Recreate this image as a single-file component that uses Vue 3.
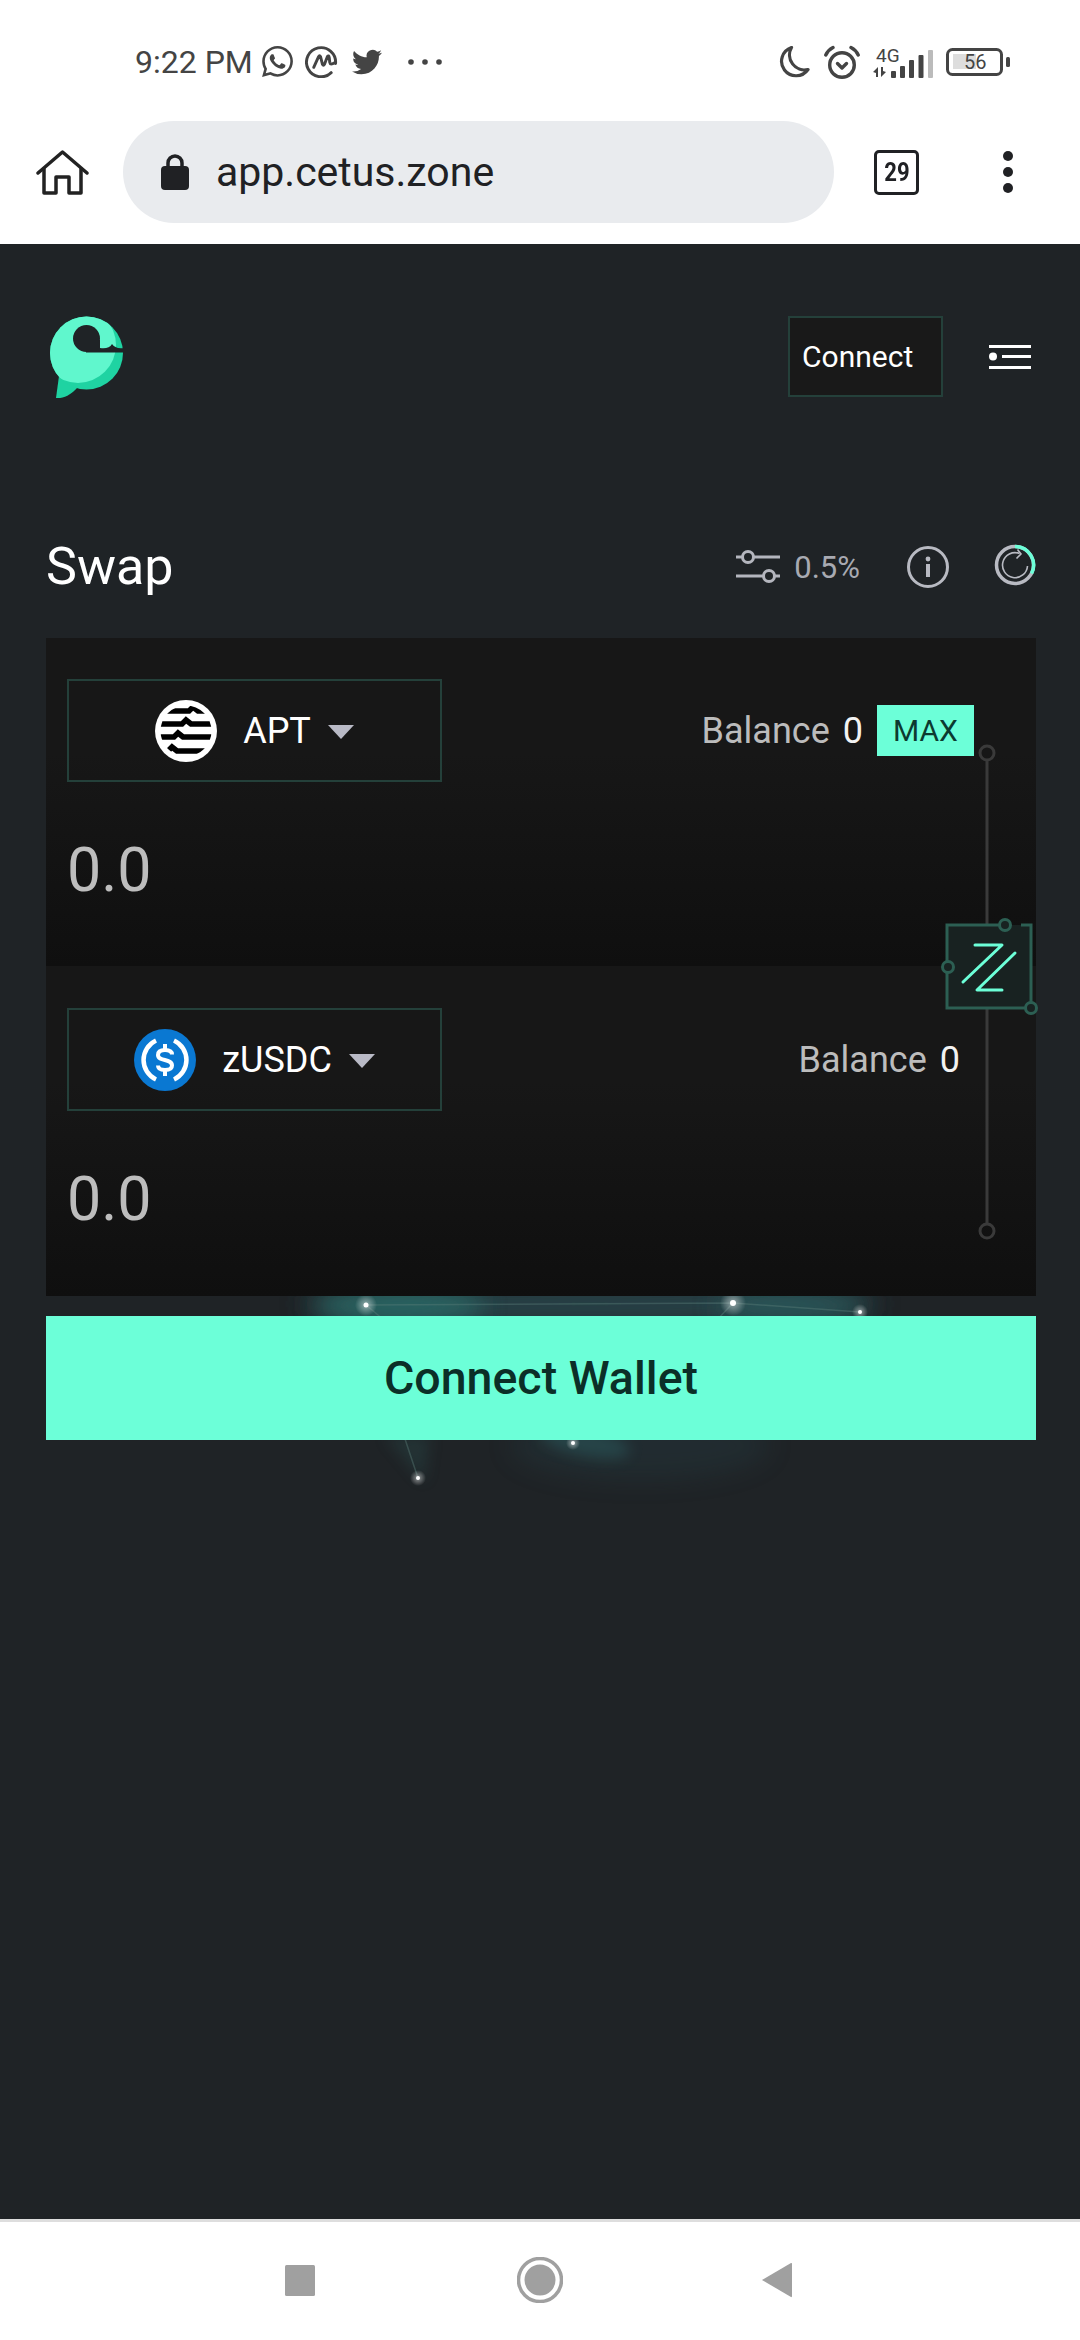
<script setup>
const tokens = [
  { name: 'APT', showMax: true },
  { name: 'zUSDC', showMax: false },
]

const stars = [
  { x: 366, y: 1305, r: 2.5, glow: 11 },
  { x: 733, y: 1303, r: 3, glow: 13 },
  { x: 860, y: 1312, r: 2, glow: 8 },
  { x: 418, y: 1478, r: 2, glow: 8 },
  { x: 573, y: 1443, r: 2, glow: 7 },
]

const signalBars = [
  { x: 18, y: 23, h: 7, fill: '#444' },
  { x: 27, y: 18, h: 12, fill: '#444' },
  { x: 36, y: 12, h: 18, fill: '#444' },
  { x: 45.5, y: 7, h: 23, fill: '#444' },
  { x: 55, y: 2, h: 28, fill: '#bbb' },
]
</script>

<template>
  <div class="phone">
    <div class="status-bar">
      <div class="status-left">
        <span class="time">9:22 PM</span>
        <svg class="ic-wa" viewBox="0 0 24 24" fill="#444"><path d="M17.472 14.382c-.297-.149-1.758-.867-2.03-.967-.273-.099-.471-.148-.67.15-.197.297-.767.966-.94 1.164-.173.199-.347.223-.644.075-.297-.15-1.255-.463-2.39-1.475-.883-.788-1.48-1.761-1.653-2.059-.173-.297-.018-.458.13-.606.134-.133.298-.347.446-.52.149-.174.198-.298.298-.497.099-.198.05-.371-.025-.52-.075-.149-.669-1.612-.916-2.207-.242-.579-.487-.5-.669-.51-.173-.008-.371-.01-.57-.01-.198 0-.52.074-.792.372-.272.297-1.04 1.016-1.04 2.479 0 1.462 1.065 2.875 1.213 3.074.149.198 2.096 3.2 5.077 4.487.709.306 1.262.489 1.694.625.712.227 1.36.195 1.871.118.571-.085 1.758-.719 2.006-1.413.248-.694.248-1.289.173-1.413-.074-.124-.272-.198-.57-.347m-5.421 7.403h-.004a9.87 9.87 0 01-5.031-1.378l-.361-.214-3.741.982.998-3.648-.235-.374a9.86 9.86 0 01-1.51-5.26c.001-5.45 4.436-9.884 9.888-9.884 2.64 0 5.122 1.03 6.988 2.898a9.825 9.825 0 012.893 6.994c-.003 5.45-4.437 9.884-9.885 9.884m8.413-18.297A11.815 11.815 0 0012.05 0C5.495 0 .16 5.335.157 11.892c0 2.096.547 4.142 1.588 5.945L.057 24l6.305-1.654a11.882 11.882 0 005.683 1.448h.005c6.554 0 11.89-5.335 11.893-11.893a11.821 11.821 0 00-3.48-8.413z" /></svg>
        <svg class="ic-coin" viewBox="0 0 34 34" fill="none" stroke="#444" stroke-width="3" stroke-linecap="round" stroke-linejoin="round"><path d="M31.5 19A15 15 0 1 0 27 28.5" /><path d="M9 23 L14 12 Q15 10 16 12 L18 20 Q19 22 20 20 L23 12 Q24.500 10 25 13 L25.500 18 Q26 21 31 18" /></svg>
        <svg class="ic-tw" viewBox="0 0 24 24" fill="#444"><path d="M23.953 4.57a10 10 0 01-2.825.775 4.958 4.958 0 002.163-2.723c-.951.555-2.005.959-3.127 1.184a4.92 4.92 0 00-8.384 4.482C7.69 8.095 4.067 6.13 1.64 3.162a4.822 4.822 0 00-.666 2.475c0 1.71.87 3.213 2.188 4.096a4.904 4.904 0 01-2.228-.616v.06a4.923 4.923 0 003.946 4.827 4.996 4.996 0 01-2.212.085 4.936 4.936 0 004.604 3.417 9.867 9.867 0 01-6.102 2.105c-.39 0-.779-.023-1.17-.067a13.995 13.995 0 007.557 2.209c9.053 0 13.998-7.496 13.998-13.985 0-.21 0-.42-.015-.63A9.935 9.935 0 0024 4.59z" /></svg>
        <svg class="ic-more" viewBox="0 0 34 6" fill="#444"><circle cx="3" cy="3" r="2.800" /><circle cx="17" cy="3" r="2.800" /><circle cx="31" cy="3" r="2.800" /></svg>
      </div>
      <div class="status-right">
        <svg class="ic-moon" viewBox="0 0 31 33" fill="none" stroke="#444" stroke-width="3.200" stroke-linejoin="round"><path d="M12.500 2.500A14.500 14.500 0 1 0 29 24.500 A15 15 0 0 1 12.500 2.500Z" /></svg>
        <svg class="ic-alarm" viewBox="0 0 36 34" fill="none" stroke="#444" stroke-width="3.400" stroke-linecap="round" stroke-linejoin="round"><circle cx="18" cy="20" r="12.300" /><path d="M1.800 10 Q4 5 9 2.500" /><path d="M34.200 10 Q32 5 27 2.500" /><path d="M13.500 18.500 L18 23 L22.500 18.500" /></svg>
        <svg class="ic-signal" viewBox="0 -4 60 36" fill="#444">
          <text x="3" y="14" class="net-label">4G</text>
          <path d="M5 19 V29 H3 V25 L0 24 Z" />
          <path d="M8 29 V19 H10 V23 L13 24 Z" />
          <rect v-for="bar in signalBars" :key="bar.x" :x="bar.x" :y="bar.y" width="5" :height="bar.h" rx="1" :fill="bar.fill" />
        </svg>
        <svg class="ic-battery" viewBox="0 0 64 28" fill="none">
          <rect x="7" y="6" width="23" height="15" fill="#ddd" />
          <rect x="1.500" y="1.500" width="54" height="25" rx="5" stroke="#444" stroke-width="3" />
          <rect x="60" y="9" width="4" height="10" rx="1.500" fill="#444" />
          <text x="18" y="20.500" class="battery-label">56</text>
        </svg>
      </div>
    </div>

    <div class="browser-bar">
      <svg class="ic-home" viewBox="0 0 53 45" fill="none" stroke="#222" stroke-width="3.500" stroke-linecap="round" stroke-linejoin="round"><path d="M2 23 L26.500 2 L51 23" /><path d="M8 19 V43 H20 V27 H33 V43 H45 V19" /></svg>
      <div class="url-pill">
        <svg class="ic-lock" viewBox="0 0 28 36" fill="#202124"><path d="M7 16 V9 A7 7 0 0 1 21 9 V16" fill="none" stroke="#202124" stroke-width="3.500" /><rect y="12" width="28" height="24" rx="4" /></svg>
        <span class="url">app.cetus.zone</span>
      </div>
      <div class="tab-count"><span>29</span></div>
      <svg class="ic-dots" viewBox="0 0 12 42" fill="#202124"><circle cx="6" cy="5" r="5" /><circle cx="6" cy="21" r="5" /><circle cx="6" cy="37" r="5" /></svg>
    </div>

    <main class="main">
      <svg class="sky" viewBox="0 1284 1080 220" fill="none">
        <defs>
          <filter id="soft" x="-50%" y="-100%" width="200%" height="300%"><feGaussianBlur stdDeviation="12" /></filter>
          <filter id="softer" x="-50%" y="-100%" width="200%" height="300%"><feGaussianBlur stdDeviation="7" /></filter>
          <radialGradient id="halo"><stop offset="0" stop-color="#fff" stop-opacity=".5" /><stop offset="1" stop-color="#fff" stop-opacity="0" /></radialGradient>
        </defs>
        <ellipse cx="590" cy="1304" rx="290" ry="20" fill="#2c4a50" opacity=".8" filter="url(#soft)" />
        <ellipse cx="400" cy="1306" rx="85" ry="20" fill="#2a6f6c" opacity=".75" filter="url(#soft)" />
        <ellipse cx="790" cy="1306" rx="75" ry="18" fill="#2a5f60" opacity=".7" filter="url(#soft)" />
        <ellipse cx="640" cy="1446" rx="130" ry="34" fill="#254047" opacity=".3" filter="url(#soft)" />
        <ellipse cx="585" cy="1442" rx="46" ry="14" fill="#2f6a6c" opacity=".4" filter="url(#softer)" transform="rotate(12 585 1442)" />
        <path d="M385 1436 H430 L424 1482 Z" fill="#2b4f50" opacity=".35" filter="url(#softer)" />
        <path d="M366 1305 L733 1303 L860 1312 M366 1305 L396 1330 M733 1303 L715 1322 M404 1436 L418 1478" stroke="#5d7f7b" stroke-width="1.500" opacity=".4" />
        <g v-for="star in stars" :key="star.x">
          <circle :cx="star.x" :cy="star.y" :r="star.glow" fill="url(#halo)" />
          <circle :cx="star.x" :cy="star.y" :r="star.r" fill="#fff" />
        </g>
      </svg>

      <div class="content">
        <header class="header">
          <svg class="logo" viewBox="0 0 73 82">
            <path d="M9 60 L6 82 C14 83 22 78 28 71 Z" fill="#1fd3a2" />
            <circle cx="36.500" cy="37" r="36.500" fill="#1fd3a2" />
            <clipPath id="logo-clip"><circle cx="36.500" cy="37" r="36.500" /></clipPath>
            <circle cx="28" cy="29" r="38" fill="#60f7cd" clip-path="url(#logo-clip)" />
            <circle cx="36.500" cy="22.500" r="13.500" fill="#1f2326" />
            <path d="M36 36.500 H74 V32 C68 33 64 31 62 28 C60 32 55 33 50 32 V24 H36 Z" fill="#1f2326" />
          </svg>
          <div class="header-right">
            <button class="connect">Connect</button>
            <svg class="ic-menu" viewBox="0 0 42 24" fill="#fff"><rect y="0" width="42" height="3" /><circle cx="4" cy="11.500" r="4" /><rect x="13" y="10" width="29" height="3" /><rect y="21" width="42" height="3" /></svg>
          </div>
        </header>

        <div class="title-row">
          <h1 class="title">Swap</h1>
          <div class="tools">
            <svg class="ic-sliders" viewBox="0 0 44 34" fill="none" stroke="#b4b6be" stroke-width="3"><path d="M0 7 H6 M18 7 H44 M0 26 H27 M39 26 H44" /><circle cx="12" cy="7" r="5.500" /><circle cx="33" cy="26" r="5.500" /></svg>
            <span class="slippage">0.5%</span>
            <svg class="ic-info" viewBox="0 0 42 42" fill="none" stroke="#b8bac2"><circle cx="21" cy="21" r="19.500" stroke-width="3" /><circle cx="21" cy="13" r="2.400" fill="#b8bac2" stroke="none" /><rect x="19" y="18" width="4" height="13" fill="#b8bac2" stroke="none" /></svg>
            <svg class="ic-timer" viewBox="0 0 42 42" fill="none">
              <circle cx="21" cy="21" r="18.500" stroke="#b8bac2" stroke-width="3.500" />
              <path d="M21 2.500A18.500 18.500 0 0 1 37.500 29.500" stroke="#6cffd8" stroke-width="3.500" />
              <path d="M33.500 22A12.500 12.500 0 1 1 25.500 9.500" stroke="#b8bac2" stroke-width="1.600" />
              <path d="M22.500 14.500 L27 10 L23.500 5.500" stroke="#b8bac2" stroke-width="1.600" />
            </svg>
          </div>
        </div>

        <section class="card">
          <div v-for="token in tokens" :key="token.name" class="panel">
            <div class="panel-top">
              <button class="token">
                <svg v-if="token.name === 'APT'" class="token-icon" viewBox="0 0 62 62">
                  <circle cx="31" cy="31" r="31" fill="#fff" />
                  <clipPath id="apt-clip"><circle cx="31" cy="31" r="25.500" /></clipPath>
                  <g clip-path="url(#apt-clip)" fill="none" stroke="#000" stroke-width="5.500">
                    <path d="M0 11 H34 L38 7 L43 11 H62" />
                    <path d="M0 24 H27 L31 20 L36 24 H62" />
                    <path d="M0 37 H19 L23 33 L28 37 H62" />
                    <path d="M0 51 H13 L17 47 L22 51 H62" />
                  </g>
                </svg>
                <svg v-else class="token-icon" viewBox="0 0 62 62" fill="none" stroke="#fff">
                  <circle cx="31" cy="31" r="31" fill="#0a78d2" stroke="none" />
                  <path d="M22 11.500A21.500 21.500 0 0 0 22 50.500" stroke-width="4.500" />
                  <path d="M40 11.500A21.500 21.500 0 0 1 40 50.500" stroke-width="4.500" />
                  <path d="M38 25.500C38 22 35 21 31 21C27 21 24 22.500 24 26C24 33 38 29 38 36.500C38 40 35 41 31 41C27 41 24 40 24 36.500" stroke-width="4" />
                  <path d="M31 15 V21 M31 41 V47" stroke-width="4" />
                </svg>
                <span class="token-name">{{ token.name }}</span>
                <svg class="caret" viewBox="0 0 26 14"><path d="M0 0 H26 L13 14 Z" fill="#b9bac6" /></svg>
              </button>
              <div class="balance" :class="{ 'balance-wide': !token.showMax }">
                <span class="balance-label">Balance</span>
                <span class="balance-value">0</span>
                <button v-if="token.showMax" class="max">MAX</button>
              </div>
            </div>
            <div class="amount">0.0</div>
          </div>

          <svg class="rail" viewBox="0 0 20 498" fill="none" stroke="#3a3a3a" stroke-width="3"><path d="M10 17 V481" /><circle cx="10" cy="10" r="7" /><circle cx="10" cy="488" r="7" /></svg>
          <svg class="switch" viewBox="0 0 98 98" fill="none">
            <rect x="7" y="7" width="84" height="83" fill="#182221" />
            <path d="M81 7 H91 V90 H7 V7 H59" stroke="#2c5f53" stroke-width="3" />
            <circle cx="65" cy="7" r="5.500" fill="#182221" stroke="#2c5f53" stroke-width="3" />
            <circle cx="8" cy="49" r="5.500" fill="#182221" stroke="#2c5f53" stroke-width="3" />
            <circle cx="91" cy="90" r="5.500" fill="#182221" stroke="#2c5f53" stroke-width="3" />
            <path d="M35 27 H62 L23 64" stroke="#6cffd8" stroke-width="3" stroke-linecap="round" stroke-linejoin="round" />
            <path d="M75 35 L37 72 H62" stroke="#6cffd8" stroke-width="3" stroke-linecap="round" stroke-linejoin="round" />
          </svg>
        </section>

        <button class="wallet">Connect Wallet</button>
      </div>
    </main>

    <nav class="nav">
      <svg viewBox="0 0 46 46"><rect x="8" y="8" width="30" height="31" rx="1.500" fill="#a0a0a0" /></svg>
      <svg viewBox="0 0 46 46"><circle cx="23" cy="23" r="21.500" fill="none" stroke="#a0a0a0" stroke-width="3.500" /><circle cx="23" cy="23" r="15.500" fill="#a0a0a0" /></svg>
      <svg viewBox="0 0 46 46"><path d="M8 23 L37 6 Q38 5.500 38 7 V39 Q38 40.500 37 40 Z" fill="#a0a0a0" /></svg>
    </nav>
  </div>
</template>

<style>
html,
body {
  margin: 0;
  background: #fff;
}
</style>

<style scoped>
.phone {
  width: 1080px;
  height: 2340px;
  display: flex;
  flex-direction: column;
  overflow: hidden;
  background: #fff;
  font-family: Roboto, "Liberation Sans", sans-serif;
}

button {
  font-family: inherit;
  cursor: pointer;
}

.status-bar {
  height: 121px;
  flex: none;
  display: flex;
  align-items: center;
  justify-content: space-between;
  padding: 2px 70px 0 135px;
  box-sizing: border-box;
  color: #444;
}

.status-left,
.status-right {
  display: flex;
  align-items: center;
}

.time {
  width: 115px;
  font-size: 32px;
  white-space: nowrap;
}

.ic-wa {
  width: 31px;
  height: 31px;
  margin-left: 12px;
}

.ic-coin {
  width: 33px;
  height: 33px;
  margin-left: 12px;
}

.ic-tw {
  width: 30px;
  height: 30px;
  margin-left: 14px;
}

.ic-more {
  width: 34px;
  height: 6px;
  margin-left: 26px;
}

.ic-moon {
  width: 31px;
  height: 33px;
}

.ic-alarm {
  width: 36px;
  height: 34px;
  margin-left: 14px;
}

.ic-signal {
  width: 60px;
  height: 36px;
  margin-left: 13px;
}

.net-label {
  font-size: 19px;
  fill: #444;
}

.ic-battery {
  width: 64px;
  height: 28px;
  margin-left: 13px;
}

.battery-label {
  font-size: 20px;
  fill: #444;
}

.browser-bar {
  height: 123px;
  flex: none;
  display: flex;
  align-items: center;
  padding: 0 0 21px 36px;
  box-sizing: border-box;
}

.ic-home {
  width: 53px;
  height: 45px;
}

.url-pill {
  width: 711px;
  height: 102px;
  margin-left: 34px;
  padding-left: 38px;
  box-sizing: border-box;
  display: flex;
  align-items: center;
  gap: 27px;
  background: #e9ebee;
  border-radius: 51px;
}

.ic-lock {
  width: 28px;
  height: 36px;
}

.url {
  font-size: 41px;
  color: #202124;
}

.tab-count {
  width: 45px;
  height: 45px;
  margin-left: 40px;
  box-sizing: border-box;
  border: 3px solid #202124;
  border-radius: 5px;
  display: flex;
  align-items: center;
  justify-content: center;
  font-size: 26px;
  font-weight: 700;
  color: #202124;
}

.tab-count span {
  display: inline-block;
  transform: scaleX(0.85);
}

.ic-dots {
  width: 12px;
  height: 42px;
  margin-left: 83px;
}

.main {
  flex: 1;
  position: relative;
  overflow: hidden;
  background: #1f2326;
}

.sky {
  position: absolute;
  left: 0;
  top: 1040px;
  width: 1080px;
  height: 220px;
}

.content {
  position: relative;
  padding: 72px 44px 0 46px;
}

.header {
  display: flex;
  align-items: flex-start;
  justify-content: space-between;
  padding-left: 4px;
}

.logo {
  width: 73px;
  height: 82px;
}

.header-right {
  display: flex;
  align-items: center;
  gap: 46px;
  padding-right: 5px;
}

.connect {
  width: 155px;
  height: 81px;
  padding: 0 0 0 12px;
  text-align: left;
  font-size: 30px;
  color: #fff;
  background: #191919;
  border: 2px solid #24403a;
}

.ic-menu {
  width: 42px;
  height: 24px;
}

.title-row {
  height: 60px;
  margin-top: 139px;
  display: flex;
  align-items: center;
  justify-content: space-between;
}

.title {
  margin: -2px 0 0;
  font-size: 52px;
  font-weight: 400;
  color: #fff;
}

.tools {
  display: flex;
  align-items: center;
}

.ic-sliders {
  width: 44px;
  height: 34px;
}

.slippage {
  margin-left: 14px;
  font-size: 31px;
  color: #a8aab2;
}

.ic-info {
  width: 42px;
  height: 42px;
  margin-left: 47px;
}

.ic-timer {
  width: 42px;
  height: 42px;
  margin-left: 45px;
  margin-top: -4px;
}

.card {
  position: relative;
  margin-top: 41px;
}

.panel {
  height: 328px;
  padding: 41px 0 0 21px;
  box-sizing: border-box;
  background: linear-gradient(#171717 0%, #171717 35%, #0f0f0f 100%);
}

.panel + .panel {
  height: 330px;
  padding-top: 42px;
}

.panel-top {
  display: flex;
  align-items: center;
  justify-content: space-between;
}

.token {
  width: 375px;
  height: 103px;
  flex: none;
  padding: 0;
  display: flex;
  align-items: center;
  justify-content: center;
  background: transparent;
  border: 2px solid #24403a;
}

.token-icon {
  width: 62px;
  height: 62px;
  flex: none;
}

.token-name {
  margin-left: 26px;
  font-size: 36px;
  color: #fff;
}

.caret {
  width: 26px;
  height: 14px;
  margin-left: 17px;
  margin-top: 2px;
}

.balance {
  display: flex;
  align-items: center;
  padding-right: 62px;
  font-size: 36px;
}

.balance-wide {
  padding-right: 76px;
}

.balance-label {
  color: #bcbcbc;
}

.balance-value {
  margin-left: 13px;
  color: #f2f2f2;
}

.max {
  width: 97px;
  height: 51px;
  margin-left: 14px;
  padding: 0;
  font-size: 30px;
  color: #0c3a30;
  background: #6cffd8;
  border: 0;
}

.amount {
  margin-top: 53px;
  font-size: 61px;
  line-height: 70px;
  color: #bdbdbd;
}

.rail {
  position: absolute;
  left: 931px;
  top: 105px;
  width: 20px;
  height: 498px;
}

.switch {
  position: absolute;
  left: 894px;
  top: 280px;
  width: 98px;
  height: 98px;
}

.wallet {
  display: block;
  width: 100%;
  height: 124px;
  margin-top: 20px;
  padding: 0;
  font-size: 46.5px;
  font-weight: 500;
  color: #0b2f28;
  background: #6cffd8;
  border: 0;
}

.nav {
  height: 121px;
  flex: none;
  box-sizing: border-box;
  border-top: 3px solid #dedede;
  display: flex;
  align-items: center;
  padding-left: 277px;
}

.nav svg {
  width: 46px;
  height: 46px;
  margin-top: -2px;
}

.nav svg:nth-child(2) {
  margin-left: 194px;
}

.nav svg:nth-child(3) {
  margin-left: 191px;
}
</style>
